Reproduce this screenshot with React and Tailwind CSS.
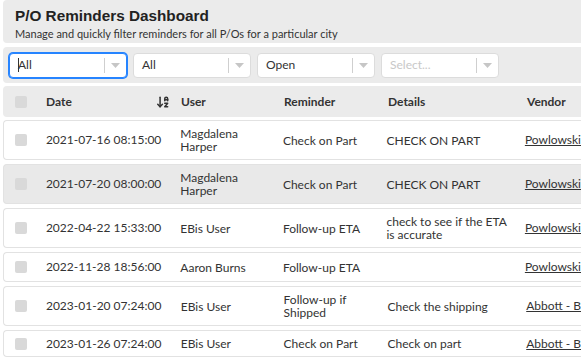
import React from "react";
import { ArrowDownAZ } from "lucide-react";

const rows = [
  { date: "2021-07-16 08:15:00", user: ["Magdalena", "Harper"], rem: ["Check on Part"], det: ["CHECK ON PART"], vendor: "Powlowski", h: "h-[40px]", bg: "bg-white" },
  { date: "2021-07-20 08:00:00", user: ["Magdalena", "Harper"], rem: ["Check on Part"], det: ["CHECK ON PART"], vendor: "Powlowski", h: "h-[40px]", bg: "bg-[#e9e9e9]" },
  { date: "2022-04-22 15:33:00", user: ["EBis User"], rem: ["Follow-up ETA"], det: ["check to see if the ETA", "is accurate"], vendor: "Powlowski", h: "h-[40px]", bg: "bg-white" },
  { date: "2022-11-28 18:56:00", user: ["Aaron Burns"], rem: ["Follow-up ETA"], det: [], vendor: "Powlowski", h: "h-[30px]", bg: "bg-white" },
  { date: "2023-01-20 07:24:00", user: ["EBis User"], rem: ["Follow-up if", "Shipped"], det: ["Check the shipping"], vendor: "Abbott - B", h: "h-[40px]", bg: "bg-white" },
  { date: "2023-01-26 07:24:00", user: ["EBis User"], rem: ["Check on Part"], det: ["Check on part"], vendor: "Abbott - B", h: "h-[27px]", bg: "bg-white" },
];

function Lines({ lines }) {
  return (
    <div className="flex flex-col leading-[13px]">
      {lines.map((l, i) => (
        <span key={i} className="whitespace-nowrap">{l}</span>
      ))}
    </div>
  );
}

function Select({ value, placeholder, focused }) {
  return (
    <div
      className={`flex h-[25px] w-[118px] items-center rounded-[4px] bg-white ${
        focused ? "border border-[#2684ff] shadow-[0_0_0_1px_#2684ff]" : "border border-[#dcdcdc]"
      }`}
    >
      <div className="flex flex-1 items-center pl-[8px] text-[12px]">
        {focused && <span className="mr-[-1px] inline-block h-[14px] w-[1px] bg-[#333]" />}
        {value ? (
          <span className="text-[#333]">{value}</span>
        ) : (
          <span className="text-[#c8c8c8]">{placeholder}</span>
        )}
      </div>
      <div className="h-[15px] w-[1px] bg-[#cfcfcf]" />
      <div className="flex w-[21px] items-center justify-center">
        <svg width="9" height="5" viewBox="0 0 9 5">
          <path d="M0 0 L9 0 L4.5 5 Z" fill="#c6c6c6" />
        </svg>
      </div>
    </div>
  );
}

function Check() {
  return <div className="h-[12px] w-[12px] rounded-[2px] bg-[#d9d9d9]" />;
}

export default function App() {
  return (
    <div
      className="h-[360px] w-[581px] overflow-hidden bg-white text-[#333]"
      style={{ fontFamily: "Lato, 'Open Sans', sans-serif" }}
    >
      <div className="ml-[3px] flex h-[43px] flex-col rounded-l-[4px] bg-[#ebebeb] pl-[12px] pt-[6px]">
        <div
          className="text-[15.3px] font-bold leading-[19px] text-[#222]"
          style={{ fontFamily: "'Liberation Sans', Arial, sans-serif" }}
        >
          P/O Reminders Dashboard
        </div>
        <div className="mt-[2px] text-[11px] leading-[13px] text-[#333]">
          Manage and quickly filter reminders for all P/Os for a particular city
        </div>
      </div>

      <div className="ml-[3px] mt-[4px] flex h-[36px] items-center gap-[6px] rounded-l-[4px] bg-[#ebebeb] pl-[6px]">
        <Select value="All" focused />
        <Select value="All" />
        <Select value="Open" />
        <Select placeholder="Select..." />
      </div>

      <div className="ml-[3px] mt-[3px] flex h-[31px] items-center rounded-l-[4px] bg-[#ebebeb] text-[12px] font-bold">
        <div className="w-[43px] pl-[12px]">
          <Check />
        </div>
        <div className="flex w-[135px] items-center justify-between pr-[11px]">
          <span>Date</span>
          <ArrowDownAZ size={14} strokeWidth={2.6} color="#333" />
        </div>
        <div className="w-[103px]">User</div>
        <div className="w-[104px]">Reminder</div>
        <div className="w-[139px]">Details</div>
        <div className="flex-1">Vendor</div>
      </div>

      <div className="mt-[3px] flex flex-col gap-[4px]">
        {rows.map((r, i) => (
          <div
            key={i}
            className={`ml-[3px] flex ${r.h} shrink-0 items-center rounded-l-[4px] border border-r-0 border-[#e2e2e2] ${r.bg} text-[12px]`}
          >
            <div className="w-[42px] pl-[11px]">
              <Check />
            </div>
            <div className="w-[135px] whitespace-nowrap">{r.date}</div>
            <div className="w-[103px]">
              <Lines lines={r.user} />
            </div>
            <div className="w-[104px]">
              <Lines lines={r.rem} />
            </div>
            <div className="w-[139px]">
              <Lines lines={r.det} />
            </div>
            <div className="flex-1 whitespace-nowrap underline">{r.vendor}</div>
          </div>
        ))}
      </div>
    </div>
  );
}
